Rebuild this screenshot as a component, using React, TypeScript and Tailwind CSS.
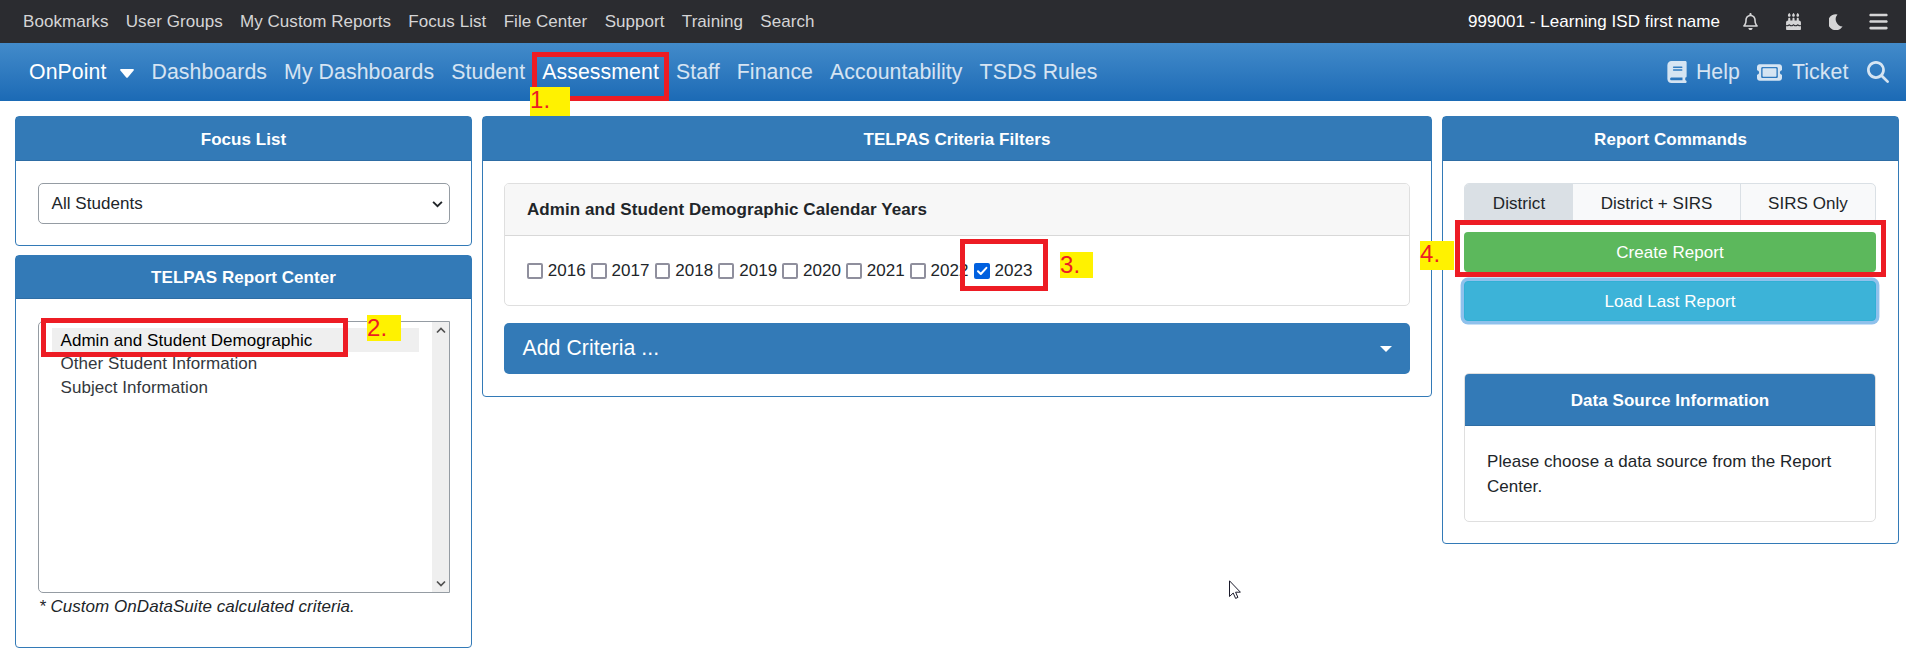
import type { ReactNode } from 'react';
import { FaBars, FaBook, FaCakeCandles, FaMagnifyingGlass, FaRegBell, FaTicket } from 'react-icons/fa6';

const topLinks = ['Bookmarks', 'User Groups', 'My Custom Reports', 'Focus List', 'File Center', 'Support', 'Training', 'Search'];

const navLinks = ['Dashboards', 'My Dashboards', 'Student', 'Assessment', 'Staff', 'Finance', 'Accountability', 'TSDS Rules'];

const years = [2016, 2017, 2018, 2019, 2020, 2021, 2022, 2023];

const reports = ['Admin and Student Demographic', 'Other Student Information', 'Subject Information'];

// numbered walkthrough steps drawn over the page
const steps = [
  { label: '1.', box: 'left-[532px] top-[52px] w-[137px] h-[49px]', tag: 'left-[530px] top-[87px] w-[40px] h-[29px] leading-[26px]' },
  { label: '2.', box: 'left-[41px] top-[318px] w-[307px] h-[39px]', tag: 'left-[367px] top-[315px] w-[34px] h-[26px] leading-[25px]' },
  { label: '3.', box: 'left-[960px] top-[239px] w-[88px] h-[52px]', tag: 'left-[1060px] top-[252px] w-[33px] h-[26px] leading-[25px]' },
  { label: '4.', box: 'left-[1455px] top-[220px] w-[431px] h-[57px]', tag: 'left-[1420px] top-[241px] w-[34px] h-[29px] leading-[26px]' },
];

function Panel({ title, className, children }: { title: string; className: string; children: ReactNode }) {
  return (
    <section className={`rounded-[4px] border border-[#337ab7] bg-white ${className}`}>
      <h2 className="border-b border-[#2e6da4] bg-[#337ab7] pb-[8px] pt-[10px] text-center font-bold text-white">
        {title}
      </h2>
      {children}
    </section>
  );
}

function Chevron({ up = false, className }: { up?: boolean; className: string }) {
  return (
    <svg viewBox="0 0 10 7" fill="none" stroke="currentColor" strokeWidth="1.7" className={className}>
      <path d={up ? 'M1 5.5 5 1.5 9 5.5' : 'M1 1.5 5 5.5 9 1.5'} />
    </svg>
  );
}

function TopBar() {
  return (
    <div className="flex h-[43px] items-center justify-between bg-[#2b2c30] pl-[23px] pr-[17px] text-[#d5d5d6]">
      <div className="flex gap-[17.3px]">
        {topLinks.map((link) => (
          <a key={link}>{link}</a>
        ))}
      </div>
      <div className="flex items-center">
        <span className="mr-[22px] text-white">999001 - Learning ISD first name</span>
        <FaRegBell className="mr-[26px] size-[17px]" />
        <FaCakeCandles className="mr-[27px] size-[17px]" />
        <svg viewBox="0 0 14 16" className="mr-[25px] h-[16px] w-[14px]" fill="currentColor">
          <path d="M8.5.4A8 8 0 1 0 13.6 12.6 7.4 7.4 0 0 1 8.5.4Z" />
        </svg>
        <FaBars className="size-[21px]" />
      </div>
    </div>
  );
}

function NavBar() {
  return (
    <nav className="flex h-[58px] items-center justify-between bg-linear-to-b from-[#428bca] to-[#1b6ab5] pl-[29px] pr-[17px] text-[21.25px] tracking-[0.1px] text-white/80">
      <div className="flex items-center gap-[17px]">
        <a className="flex items-center gap-[14px] text-white">
          OnPoint
          <svg viewBox="0 0 14 9" className="mt-[2px] h-[9px] w-[14px]" fill="currentColor">
            <path d="M1 0h12q1.4.4.6 1.6L8 8.2q-1 1-2 0L.4 1.6Q-.4.4 1 0Z" />
          </svg>
        </a>
        {navLinks.map((link) => (
          <a key={link} className={link === 'Assessment' ? 'text-white' : ''}>
            {link}
          </a>
        ))}
      </div>
      <div className="flex items-center">
        <FaBook className="mr-[9px] h-[22px] w-[20px]" />
        <span className="mr-[17px]">Help</span>
        <FaTicket className="mr-[10px] size-[25px]" />
        <span className="mr-[18.5px]">Ticket</span>
        <FaMagnifyingGlass className="size-[22px]" />
      </div>
    </nav>
  );
}

export default function App() {
  return (
    <div className="relative h-[664px] w-[1906px] overflow-hidden bg-white font-['Liberation_Sans',Arial,sans-serif] text-[17px] leading-[25px] tracking-[0.05px] text-[#212529]">
      <TopBar />
      <NavBar />

      <main className="flex items-start gap-[10px] pl-[15px] pt-[15px]">
        <div className="flex w-[457px] flex-col gap-[9px]">
          <Panel title="Focus List" className="h-[130px]">
            <div className="ml-[22px] mr-[21px] mt-[22px] flex h-[41px] items-center justify-between rounded-[5px] border border-[#959ca3] pl-[12.5px] pr-[6px]">
              <span>All Students</span>
              <Chevron className="h-[8px] w-[11px]" />
            </div>
          </Panel>

          <Panel title="TELPAS Report Center" className="h-[393px] [&>h2]:pt-[9px]">
            <div className="ml-[22px] mr-[21px] mt-[22px] flex h-[272px] justify-between rounded-l-[5px] border border-[#959ca3]">
              <ul className="ml-[13px] mt-[6px] w-[367px]">
                {reports.map((report, i) => (
                  <li
                    key={report}
                    className={`h-[24px] pl-[8.5px] ${i === 0 ? 'bg-[#efefef] leading-[26px] text-black' : 'leading-[24px] text-[#33383d]'}`}
                  >
                    {report}
                  </li>
                ))}
              </ul>
              <div className="flex w-[17px] flex-col items-center justify-between bg-[#efefef] py-[5px] text-[#505050]">
                <Chevron up className="h-[7px] w-[10px]" />
                <Chevron className="h-[7px] w-[10px]" />
              </div>
            </div>
            <p className="ml-[23px] mt-[1px] italic">* Custom OnDataSuite calculated criteria.</p>
          </Panel>
        </div>

        <Panel title="TELPAS Criteria Filters" className="h-[281px] w-[950px]">
          <div className="mx-[21px] mt-[22px] h-[123px] overflow-hidden rounded-[5px] border border-[#dfdfdf]">
            <h3 className="h-[52px] border-b border-[#d8d8d8] bg-[#f7f7f7] pl-[22px] font-bold leading-[51px] tracking-[0.08px]">
              Admin and Student Demographic Calendar Years
            </h3>
            <div className="flex gap-[5px] pl-[22px] pt-[22px]">
              {years.map((year) => (
                <label key={year} className="flex w-[58.8px] items-center gap-[5px]">
                  {year === 2023 ? (
                    <span className="flex size-[16px] items-center justify-center rounded-[2px] bg-[#0060df]">
                      <svg viewBox="0 0 16 16" className="size-[16px]" fill="none" stroke="white" strokeWidth="2" strokeLinecap="round" strokeLinejoin="round">
                        <path d="M4 8.3 6.8 11 12.4 4.8" />
                      </svg>
                    </span>
                  ) : (
                    <span className="size-[16px] rounded-[2px] border-2 border-[#8f8f9d] bg-white" />
                  )}
                  {year}
                </label>
              ))}
            </div>
          </div>
          <div className="mx-[21px] mt-[17px] flex h-[51px] items-center justify-between rounded-[5px] bg-[#337ab7] pl-[18.5px] pr-[18px] text-[21.25px] text-white">
            Add Criteria ...
            <svg viewBox="0 0 12 6" className="h-[6px] w-[12px]" fill="currentColor">
              <path d="M0 0h12L6 6Z" />
            </svg>
          </div>
        </Panel>

        <Panel title="Report Commands" className="h-[428px] w-[457px]">
          <div className="pl-[21px] pr-[22px] pt-[22px] text-center">
            <div className="flex h-[41px] overflow-hidden rounded-[5px] border border-[#dae0e5] bg-[#f8f9fa] leading-[39px]">
              <span className="w-[108px] bg-[#dae0e5]">District</span>
              <span className="w-[168px] border-r border-[#dae0e5]">District + SIRS</span>
              <span className="flex-1">SIRS Only</span>
            </div>
            <div className="mt-[8px] h-[40px] rounded-[4px] bg-[#5cb85c] leading-[41px] text-white">Create Report</div>
            <div className="mt-[9px] h-[40px] rounded-[4px] border border-[#31b0d5] bg-[#3cb3d8] leading-[39px] text-white shadow-[0_0_0_3.4px_#8fc1ec]">
              Load Last Report
            </div>
            <div className="mt-[52px] h-[149px] overflow-hidden rounded-[5px] border border-[#dfdfdf] text-left">
              <h3 className="h-[52px] border-b border-[#2e6da4] bg-[#337ab7] text-center font-bold leading-[53px] text-white">
                Data Source Information
              </h3>
              <p className="px-[22px] pt-[23px]">Please choose a data source from the Report Center.</p>
            </div>
          </div>
        </Panel>
      </main>

      {steps.map((step) => (
        <div key={step.label}>
          <div className={`absolute border-[5px] border-[#ed1c24] ${step.box}`} />
          <div className={`absolute bg-[#fff200] text-[24px] text-[#ed1c24] ${step.tag}`}>{step.label}</div>
        </div>
      ))}

      <svg viewBox="0 0 12 20" className="absolute left-[1229px] top-[580px] h-[20px] w-[12px]" fill="white" stroke="#1a1a2a" strokeWidth="1">
        <path d="M.5.8V16.5L4.2 13 6.6 18.4 8.9 17.4 6.6 12.2H11.4Z" />
      </svg>
    </div>
  );
}
